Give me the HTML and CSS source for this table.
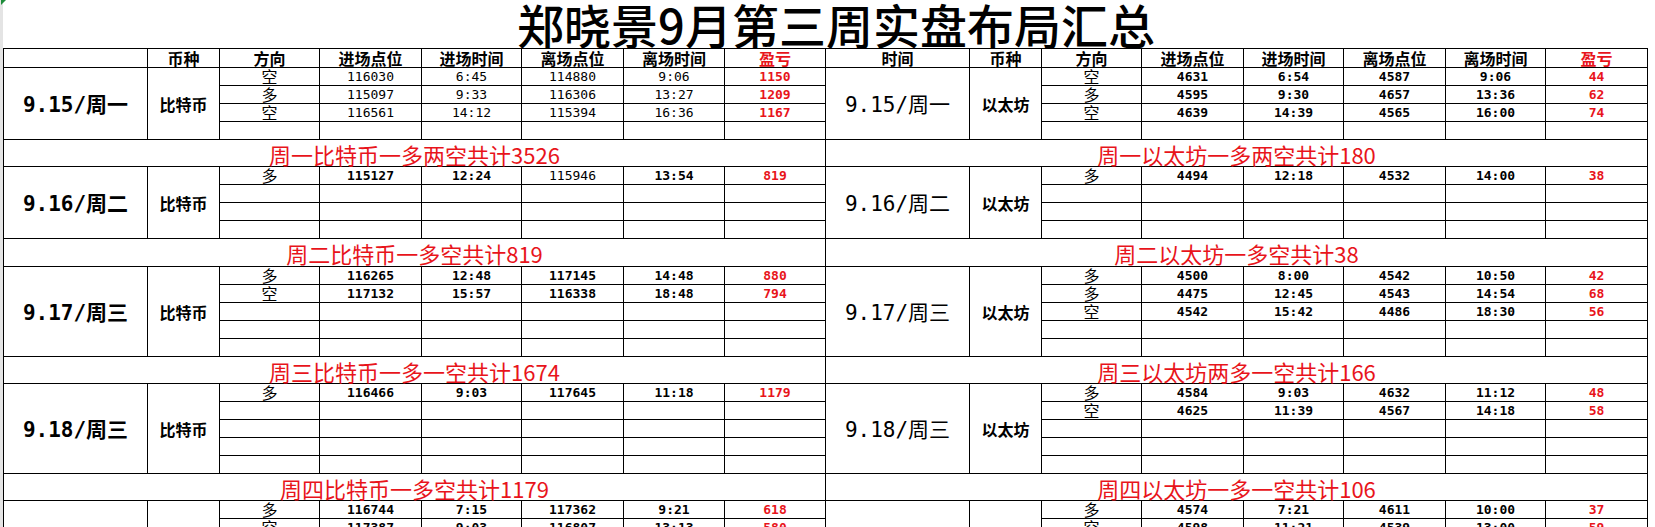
FILE: index.html
```html
<!DOCTYPE html>
<html lang="zh-CN">
<head>
<meta charset="utf-8">
<title>郑晓景9月第三周实盘布局汇总</title>
<link rel="stylesheet" href="styles.css">
</head>
<body>
<div class="page">
  <div class="gutter"><span class="flag"></span></div>
  <div class="main">
    <div class="title">郑晓景9月第三周实盘布局汇总</div>
    <div class="sheet">
      <!-- header -->
      <div class="c h"></div><div class="c h">币种</div><div class="c h">方向</div><div class="c h">进场点位</div><div class="c h">进场时间</div><div class="c h">离场点位</div><div class="c h">离场时间</div><div class="c h r">盈亏</div>
      <div class="c h">时间</div><div class="c h">币种</div><div class="c h">方向</div><div class="c h">进场点位</div><div class="c h">进场时间</div><div class="c h">离场点位</div><div class="c h">离场时间</div><div class="c h r">盈亏</div>

      <!-- block 1 -->
      <div class="c d b span4">9.15/周一</div><div class="c k span4">比特币</div>
      <div class="c t">空</div><div class="c n">116030</div><div class="c n">6:45</div><div class="c n">114880</div><div class="c n">9:06</div><div class="c n b r">1150</div>
      <div class="c d span4">9.15/周一</div><div class="c k span4">以太坊</div>
      <div class="c t">空</div><div class="c n b">4631</div><div class="c n b">6:54</div><div class="c n b">4587</div><div class="c n b">9:06</div><div class="c n b r">44</div>
      <div class="c t">多</div><div class="c n">115097</div><div class="c n">9:33</div><div class="c n">116306</div><div class="c n">13:27</div><div class="c n b r">1209</div>
      <div class="c t">多</div><div class="c n b">4595</div><div class="c n b">9:30</div><div class="c n b">4657</div><div class="c n b">13:36</div><div class="c n b r">62</div>
      <div class="c t">空</div><div class="c n">116561</div><div class="c n">14:12</div><div class="c n">115394</div><div class="c n">16:36</div><div class="c n b r">1167</div>
      <div class="c t">空</div><div class="c n b">4639</div><div class="c n b">14:39</div><div class="c n b">4565</div><div class="c n b">16:00</div><div class="c n b r">74</div>
      <div class="c"></div><div class="c"></div><div class="c"></div><div class="c"></div><div class="c"></div><div class="c"></div>
      <div class="c"></div><div class="c"></div><div class="c"></div><div class="c"></div><div class="c"></div><div class="c"></div>
      <div class="c s">周一比特币一多两空共计3526</div><div class="c s">周一以太坊一多两空共计180</div>

      <!-- block 2 -->
      <div class="c d b span4">9.16/周二</div><div class="c k span4">比特币</div>
      <div class="c t">多</div><div class="c n b">115127</div><div class="c n b">12:24</div><div class="c n">115946</div><div class="c n b">13:54</div><div class="c n b r">819</div>
      <div class="c d span4">9.16/周二</div><div class="c k span4">以太坊</div>
      <div class="c t">多</div><div class="c n b">4494</div><div class="c n b">12:18</div><div class="c n b">4532</div><div class="c n b">14:00</div><div class="c n b r">38</div>
      <div class="c"></div><div class="c"></div><div class="c"></div><div class="c"></div><div class="c"></div><div class="c"></div>
      <div class="c"></div><div class="c"></div><div class="c"></div><div class="c"></div><div class="c"></div><div class="c"></div>
      <div class="c"></div><div class="c"></div><div class="c"></div><div class="c"></div><div class="c"></div><div class="c"></div>
      <div class="c"></div><div class="c"></div><div class="c"></div><div class="c"></div><div class="c"></div><div class="c"></div>
      <div class="c"></div><div class="c"></div><div class="c"></div><div class="c"></div><div class="c"></div><div class="c"></div>
      <div class="c"></div><div class="c"></div><div class="c"></div><div class="c"></div><div class="c"></div><div class="c"></div>
      <div class="c s">周二比特币一多空共计819</div><div class="c s">周二以太坊一多空共计38</div>

      <!-- block 3 -->
      <div class="c d b span5">9.17/周三</div><div class="c k span5">比特币</div>
      <div class="c t">多</div><div class="c n b">116265</div><div class="c n b">12:48</div><div class="c n b">117145</div><div class="c n b">14:48</div><div class="c n b r">880</div>
      <div class="c d span5">9.17/周三</div><div class="c k span5">以太坊</div>
      <div class="c t">多</div><div class="c n b">4500</div><div class="c n b">8:00</div><div class="c n b">4542</div><div class="c n b">10:50</div><div class="c n b r">42</div>
      <div class="c t">空</div><div class="c n b">117132</div><div class="c n b">15:57</div><div class="c n b">116338</div><div class="c n b">18:48</div><div class="c n b r">794</div>
      <div class="c t">多</div><div class="c n b">4475</div><div class="c n b">12:45</div><div class="c n b">4543</div><div class="c n b">14:54</div><div class="c n b r">68</div>
      <div class="c"></div><div class="c"></div><div class="c"></div><div class="c"></div><div class="c"></div><div class="c"></div>
      <div class="c t">空</div><div class="c n b">4542</div><div class="c n b">15:42</div><div class="c n b">4486</div><div class="c n b">18:30</div><div class="c n b r">56</div>
      <div class="c"></div><div class="c"></div><div class="c"></div><div class="c"></div><div class="c"></div><div class="c"></div>
      <div class="c"></div><div class="c"></div><div class="c"></div><div class="c"></div><div class="c"></div><div class="c"></div>
      <div class="c"></div><div class="c"></div><div class="c"></div><div class="c"></div><div class="c"></div><div class="c"></div>
      <div class="c"></div><div class="c"></div><div class="c"></div><div class="c"></div><div class="c"></div><div class="c"></div>
      <div class="c s">周三比特币一多一空共计1674</div><div class="c s">周三以太坊两多一空共计166</div>

      <!-- block 4 -->
      <div class="c d b span5">9.18/周三</div><div class="c k span5">比特币</div>
      <div class="c t">多</div><div class="c n b">116466</div><div class="c n b">9:03</div><div class="c n b">117645</div><div class="c n b">11:18</div><div class="c n b r">1179</div>
      <div class="c d span5">9.18/周三</div><div class="c k span5">以太坊</div>
      <div class="c t">多</div><div class="c n b">4584</div><div class="c n b">9:03</div><div class="c n b">4632</div><div class="c n b">11:12</div><div class="c n b r">48</div>
      <div class="c"></div><div class="c"></div><div class="c"></div><div class="c"></div><div class="c"></div><div class="c"></div>
      <div class="c t">空</div><div class="c n b">4625</div><div class="c n b">11:39</div><div class="c n b">4567</div><div class="c n b">14:18</div><div class="c n b r">58</div>
      <div class="c"></div><div class="c"></div><div class="c"></div><div class="c"></div><div class="c"></div><div class="c"></div>
      <div class="c"></div><div class="c"></div><div class="c"></div><div class="c"></div><div class="c"></div><div class="c"></div>
      <div class="c"></div><div class="c"></div><div class="c"></div><div class="c"></div><div class="c"></div><div class="c"></div>
      <div class="c"></div><div class="c"></div><div class="c"></div><div class="c"></div><div class="c"></div><div class="c"></div>
      <div class="c"></div><div class="c"></div><div class="c"></div><div class="c"></div><div class="c"></div><div class="c"></div>
      <div class="c"></div><div class="c"></div><div class="c"></div><div class="c"></div><div class="c"></div><div class="c"></div>
      <div class="c s">周四比特币一多空共计1179</div><div class="c s">周四以太坊一多一空共计106</div>

      <!-- block 5 -->
      <div class="c d b span5"></div><div class="c k span5"></div>
      <div class="c t">多</div><div class="c n b">116744</div><div class="c n b">7:15</div><div class="c n b">117362</div><div class="c n b">9:21</div><div class="c n b r">618</div>
      <div class="c d span5"></div><div class="c k span5"></div>
      <div class="c t">多</div><div class="c n b">4574</div><div class="c n b">7:21</div><div class="c n b">4611</div><div class="c n b">10:00</div><div class="c n b r">37</div>
      <div class="c t">空</div><div class="c n b">117387</div><div class="c n b">9:03</div><div class="c n b">116807</div><div class="c n b">13:13</div><div class="c n b r">580</div>
      <div class="c t">空</div><div class="c n b">4598</div><div class="c n b">11:21</div><div class="c n b">4539</div><div class="c n b">13:00</div><div class="c n b r">59</div>
    </div>
  </div>
</div>
</body>
</html>
```
FILE: styles.css
```css
html, body {
  margin: 0;
  padding: 0;
  width: 1655px;
  height: 527px;
  overflow: hidden;
  background: #ffffff;
}

body {
  font-family: "Noto Sans CJK SC", sans-serif;
  color: #000;
}

.page {
  display: flex;
  align-items: stretch;
  height: 527px;
  overflow: hidden;
}

.gutter {
  position: relative;
  width: 3px;
  flex: 0 0 3px;
  background: #e4e4e4;
}

.flag {
  position: absolute;
  left: 1px;
  top: 0;
  width: 0;
  height: 0;
  border-top: 5px solid #1e8c3a;
  border-right: 5px solid transparent;
}

.main {
  flex: 1;
  display: flex;
  flex-direction: column;
}

.title {
  height: 48px;
  box-sizing: border-box;
  padding-left: 14px;
  text-align: center;
  font-size: 47px;
  line-height: 48px;
  font-weight: 500;
  white-space: nowrap;
}

.sheet {
  display: grid;
  width: 1645px;
  box-sizing: border-box;
  border-top: 1px solid #000;
  border-left: 1px solid #000;
  grid-template-columns: 144px 72px 100px 102px 100px 102px 101px 101px 144px 72px 100px 102px 100px 102px 100px 102px;
  grid-template-rows:
    19px
    repeat(4, 18px) 27px
    repeat(4, 18px) 28px
    repeat(5, 18px) 27px
    repeat(5, 18px) 27px
    repeat(5, 18px);
}

.c {
  box-sizing: border-box;
  border-right: 1px solid #000;
  border-bottom: 1px solid #000;
  display: flex;
  align-items: flex-end;
  justify-content: center;
  font-size: 16px;
  line-height: 17px;
  white-space: nowrap;
}

.h {
  font-weight: 700;
  line-height: 18px;
}

.t {
  font-size: 16px;
  line-height: 17px;
}

.n {
  font-family: "DejaVu Sans Mono", "Noto Sans CJK SC", monospace;
  font-size: 13px;
  line-height: 16px;
}

.b {
  font-weight: 700;
}

.r {
  color: #e8141b;
}

.d {
  align-items: center;
  padding-top: 3px;
  font-family: "DejaVu Sans Mono", "Noto Sans CJK SC", monospace;
  font-size: 21px;
  line-height: 24px;
}

.k {
  align-items: center;
  padding-top: 2px;
  font-weight: 700;
}

.span4 {
  grid-row: span 4;
}

.span5 {
  grid-row: span 5;
}

.s {
  grid-column: span 8;
  align-items: center;
  padding-top: 1px;
  color: #e8141b;
  font-size: 22px;
  line-height: 26px;
}
```
